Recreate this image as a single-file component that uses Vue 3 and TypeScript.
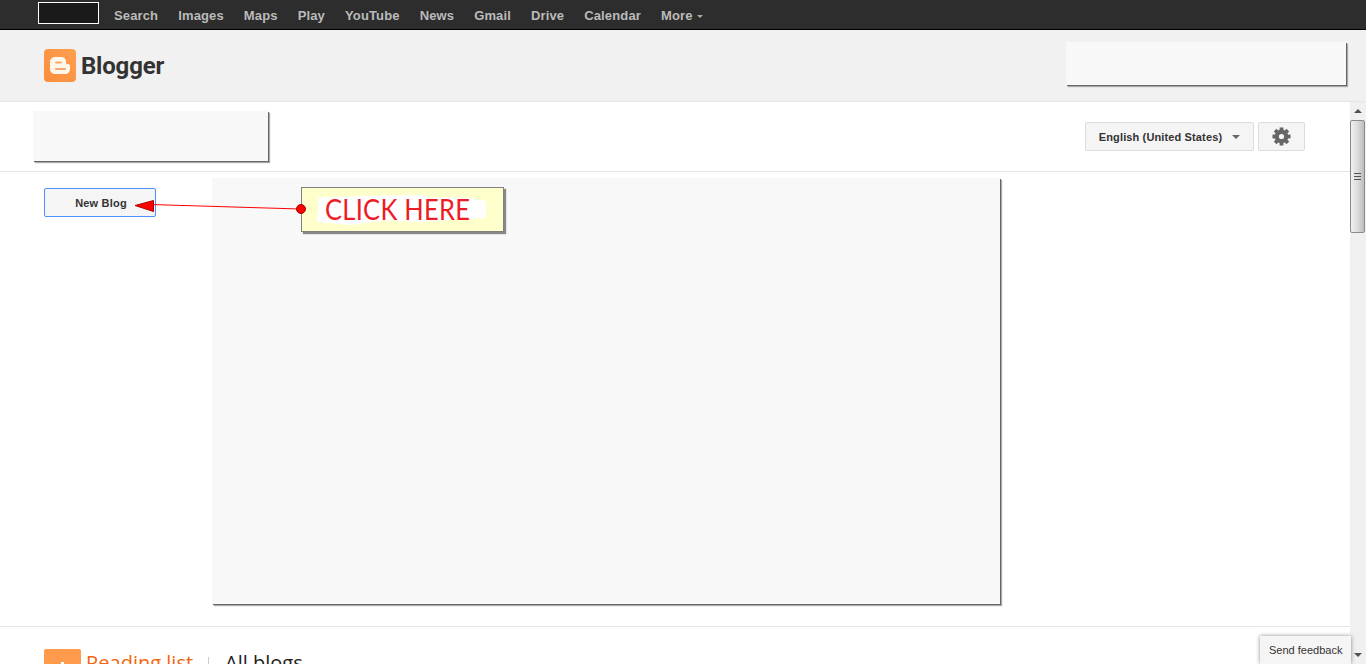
<template>
  <div class="page">
    <div class="topbar">
      <div class="account-box"></div>
      <a v-for="item in navItems" :key="item" class="nav-link">{{ item }}</a>
      <a class="nav-link">More<span class="more-caret"></span></a>
    </div>

    <div class="header">
      <svg class="logo" width="32" height="33" viewBox="0 0 32 33">
        <defs>
          <linearGradient id="logoBg" x1="1" y1="0" x2="0" y2="1">
            <stop offset="0" stop-color="#ff9f50" />
            <stop offset="1" stop-color="#f98d3c" />
          </linearGradient>
        </defs>
        <rect width="32" height="33" rx="4" fill="url(#logoBg)" />
        <path
          d="M11 8h6c3.200 0 5 2 5 4.800v1c0 1 .6 1.400 1.500 1.400h.9c1 0 1.600.6 1.600 1.600V20c0 3-2.200 5-5 5H11c-2.800 0-5-2.200-5-5v-7c0-2.800 2.200-5 5-5z"
          fill="#fff6ec"
        />
        <rect x="11" y="12.600" width="7" height="2" rx="1" fill="#f9a66a" />
        <rect x="11" y="19" width="11" height="2" rx="1" fill="#f9a66a" />
      </svg>
      <span class="brand">Blogger</span>
      <div class="redact redact-account"></div>
    </div>

    <div class="body">
      <div class="main">
        <div class="toolbar">
          <div class="redact redact-title"></div>
          <div class="toolbar-actions">
            <button class="btn lang-btn">English (United States)<span class="lang-caret"></span></button>
            <button class="btn gear-btn">
              <svg width="19" height="19" viewBox="-10 -10 20 20">
                <g fill="#666">
                  <rect
                    v-for="deg in gearTeeth"
                    :key="deg"
                    x="-2"
                    y="-9.500"
                    width="4"
                    height="5"
                    :transform="`rotate(${deg})`"
                  />
                </g>
                <circle r="5" fill="none" stroke="#666" stroke-width="4.500" />
              </svg>
            </button>
          </div>
        </div>

        <div class="content">
          <button class="new-blog">New Blog</button>
          <div class="redact redact-list"></div>

          <div class="note">
            <div class="note-blob"><span class="note-text">CLICK HERE</span></div>
          </div>
          <svg class="arrow" width="310" height="50" viewBox="0 0 310 50">
            <line x1="150" y1="32.500" x2="300" y2="37" stroke="#f00" stroke-width="1" />
            <path d="M135 33.500 L153.500 28.500 L153.500 39.500 Z" fill="#f00" stroke="#b00000" stroke-width="1" />
            <circle cx="301" cy="37" r="4.500" fill="#f00" stroke="#a00000" stroke-width="1" />
          </svg>
        </div>

        <div class="reading">
          <div class="reading-icon"><span class="reading-mark"></span></div>
          <span class="reading-title">Reading list</span>
          <span class="reading-sep"></span>
          <span class="reading-sub">All blogs</span>
        </div>
      </div>

      <div class="scrollbar">
        <div class="scroll-up"></div>
        <div class="scroll-thumb">
          <span class="grip"></span>
          <span class="grip"></span>
          <span class="grip"></span>
        </div>
        <div class="scroll-track"></div>
        <div class="scroll-down"></div>
      </div>
    </div>

    <div class="feedback">Send feedback</div>
  </div>
</template>

<script setup lang="ts">
const navItems: string[] = ['Search', 'Images', 'Maps', 'Play', 'YouTube', 'News', 'Gmail', 'Drive', 'Calendar']
const gearTeeth: number[] = [0, 45, 90, 135, 180, 225, 270, 315]
</script>

<style>
html,
body {
  margin: 0;
  overflow: hidden;
  background: #fff;
}
</style>

<style scoped>
.page {
  position: relative;
  display: flex;
  flex-direction: column;
  width: 1366px;
  height: 664px;
  overflow: hidden;
  font-family: "Liberation Sans", Arial, sans-serif;
  color: #333;
}

.topbar {
  display: flex;
  align-items: center;
  flex: none;
  box-sizing: border-box;
  height: 30px;
  padding: 2px 0 0 38px;
  background: #2d2d2d;
  border-bottom: 1px solid #000;
}

.account-box {
  box-sizing: border-box;
  width: 61px;
  height: 22px;
  margin: -5px 15px 0 0;
  background: #1a1a1a;
  border: 1px solid #fff;
}

.nav-link {
  margin-right: 20px;
  font-size: 13px;
  font-weight: 700;
  letter-spacing: 0.14px;
  color: #bbb;
  white-space: nowrap;
}

.more-caret {
  display: inline-block;
  margin-left: 4px;
  vertical-align: middle;
  border-top: 3px solid #aaa;
  border-left: 3px solid transparent;
  border-right: 3px solid transparent;
}

.header {
  display: flex;
  flex: none;
  box-sizing: border-box;
  height: 72px;
  padding-left: 44px;
  background: #f1f1f1;
  border-bottom: 1px solid #e5e5e5;
}

.logo {
  margin-top: 19px;
}

.brand {
  margin: 19px 0 0 5px;
  font-family: Roboto, sans-serif;
  font-size: 24px;
  line-height: 34px;
  font-weight: 700;
  letter-spacing: -0.2px;
  color: #333;
}

.redact {
  flex: none;
  background: #f8f8f8;
  box-shadow: 1px 1px 0 #666, 2px 2px 1px #aaa;
}

.redact-account {
  width: 280px;
  height: 43px;
  margin: 12px 20px 0 auto;
}

.body {
  display: flex;
  flex: 1;
  min-height: 0;
}

.main {
  flex: 1;
  min-width: 0;
  overflow: hidden;
}

.toolbar {
  display: flex;
  justify-content: space-between;
  box-sizing: border-box;
  height: 70px;
  padding: 9px 45px 0 33px;
  border-bottom: 1px solid #e5e5e5;
}

.redact-title {
  width: 235px;
  height: 50px;
}

.toolbar-actions {
  display: flex;
  gap: 4px;
  margin-top: 11px;
}

.btn {
  display: flex;
  align-items: center;
  justify-content: center;
  box-sizing: border-box;
  height: 29px;
  padding: 0;
  background: #f5f5f5;
  border: 1px solid #dcdcdc;
  border-radius: 2px;
  font-family: inherit;
}

.lang-btn {
  width: 169px;
  font-size: 11px;
  font-weight: 700;
  letter-spacing: 0.13px;
  color: #333;
}

.lang-caret {
  margin-left: 10px;
  border-top: 4px solid #666;
  border-left: 4px solid transparent;
  border-right: 4px solid transparent;
}

.gear-btn {
  width: 47px;
}

.content {
  position: relative;
  display: flex;
  box-sizing: border-box;
  height: 455px;
  padding: 6px 0 0 44px;
  border-bottom: 1px solid #e5e5e5;
}

.new-blog {
  box-sizing: border-box;
  width: 112px;
  height: 29px;
  margin: 10px 56px 0 0;
  padding: 0 0 0 2px;
  background: #f5f5f5;
  border: 1px solid #4d90fe;
  border-radius: 2px;
  font-family: inherit;
  font-size: 11px;
  font-weight: 700;
  letter-spacing: 0.2px;
  color: #333;
}

.redact-list {
  position: relative;
  width: 788px;
  height: 426px;
}

.redact-list::before {
  content: "";
  position: absolute;
  top: -6px;
  bottom: -7px;
  left: 8px;
  width: 745px;
  z-index: -1;
  background: #f9f9f9;
}

.arrow {
  position: absolute;
  top: 0;
  left: 0;
}

.note {
  position: absolute;
  top: 15px;
  left: 301px;
  box-sizing: border-box;
  width: 203px;
  height: 45px;
  padding: 7px 17px 6px 15px;
  background: #ffc;
  border: 1px solid #808080;
  box-shadow: 2px 2px 1px #888;
}

.note-blob {
  position: relative;
  height: 30px;
  padding-left: 8px;
  font-family: Lato, sans-serif;
  font-size: 29px;
  line-height: 28px;
  color: #ed1c24;
  white-space: nowrap;
}

.note-blob::before {
  content: "";
  position: absolute;
  inset: 0;
  background: #fff;
  clip-path: polygon(1% 8%, 30% 3%, 62% 0, 66% 8%, 88% 8%, 100% 20%, 100% 76%, 84% 82%, 60% 90%, 40% 84%, 20% 100%, 0 90%);
}

.note-text {
  position: relative;
  display: inline-block;
  letter-spacing: 0.3px;
  transform: scaleX(0.88);
  transform-origin: left center;
}

.reading {
  display: flex;
  align-items: flex-start;
  padding: 22px 0 0 44px;
}

.reading-icon {
  position: relative;
  width: 37px;
  height: 37px;
  background: #ff9a4c;
  border-radius: 2px;
}

.reading-mark {
  position: absolute;
  top: 13px;
  left: 17px;
  width: 3px;
  height: 8px;
  background: #fff;
}

.reading-title {
  margin-left: 5px;
  font-family: "Open Sans", sans-serif;
  font-size: 20px;
  line-height: 27px;
  color: #f2670f;
}

.reading-sep {
  width: 1px;
  height: 12px;
  margin: 8px 16px 0 15px;
  background: #ccc;
}

.reading-sub {
  font-family: "Open Sans", sans-serif;
  font-size: 20px;
  line-height: 27px;
  color: #222;
}

.scrollbar {
  display: flex;
  flex-direction: column;
  flex: none;
  width: 16px;
  background: #f0f0f0;
}

.scroll-up,
.scroll-down {
  display: flex;
  align-items: center;
  justify-content: center;
  flex: none;
  height: 18px;
}

.scroll-up::after {
  content: "";
  border-bottom: 4px solid #505050;
  border-left: 4px solid transparent;
  border-right: 4px solid transparent;
}

.scroll-down::after {
  content: "";
  border-top: 4px solid #505050;
  border-left: 4px solid transparent;
  border-right: 4px solid transparent;
}

.scroll-track {
  flex: 1;
}

.scroll-thumb {
  display: flex;
  flex-direction: column;
  align-items: center;
  justify-content: center;
  gap: 2px;
  flex: none;
  box-sizing: border-box;
  width: 15px;
  height: 113px;
  background: linear-gradient(90deg, #f0f0f0, #dcdcdc 50%, #bdbdbd);
  border: 1px solid #8a8a8a;
  border-radius: 2px;
}

.grip {
  width: 7px;
  height: 1px;
  background: #555;
}

.feedback {
  position: absolute;
  right: 15px;
  bottom: 0;
  box-sizing: border-box;
  width: 91px;
  height: 28px;
  padding: 8px 0 0 9px;
  background: #f5f5f5;
  box-shadow: 0 0 4px rgba(0, 0, 0, 0.45);
  font-size: 11px;
  line-height: 13px;
  color: #333;
  white-space: nowrap;
}
</style>
